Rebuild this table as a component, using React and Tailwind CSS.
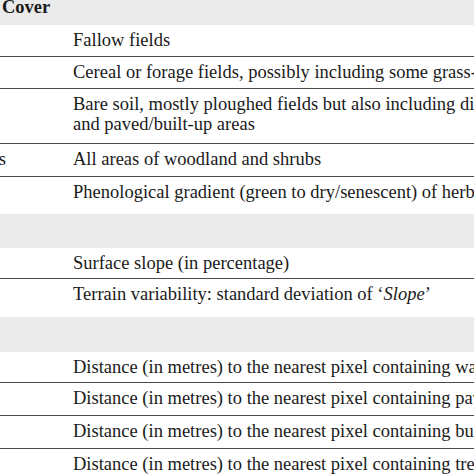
import React from 'react';

const rows = [
  { h: 'h-[32px]', left: '', lines: ['Fallow fields'] },
  { h: 'h-[32px]', left: '', lines: ['Cereal or forage fields, possibly including some grass-covered areas'] },
  { h: 'h-[55px]', left: '', lines: ['Bare soil, mostly ploughed fields but also including dirt tracks', 'and paved/built-up areas'] },
  { h: 'h-[33px]', left: 's', lines: ['All areas of woodland and shrubs'] },
  { h: 'h-[37px]', left: '', lines: ['Phenological gradient (green to dry/senescent) of herbaceous cover'] },
  { gray: true, h: 'h-[34px]' },
  { h: 'h-[31px]', left: '', lines: ['Surface slope (in percentage)'] },
  { h: 'h-[38px]', left: '', slope: true },
  { gray: true, h: 'h-[35px]' },
  { h: 'h-[31px]', left: '', lines: ['Distance (in metres) to the nearest pixel containing water'] },
  { h: 'h-[33px]', left: '', lines: ['Distance (in metres) to the nearest pixel containing paved areas'] },
  { h: 'h-[33px]', left: '', lines: ['Distance (in metres) to the nearest pixel containing built-up areas'] },
  { h: 'h-[40px]', left: '', lines: ['Distance (in metres) to the nearest pixel containing trees'], last: true },
];

export default function App() {
  return (
    <div className="w-[474px] h-[474px] overflow-hidden bg-white text-[18.5px] leading-[20px] text-[#1a1a1a] font-['Liberation_Serif',serif]">
      {/* header band */}
      <div className="h-[25px] bg-[#ebebeb] pl-[2px] overflow-hidden">
        <div className="font-bold leading-[16px] -mt-[1px]">Cover</div>
      </div>
      {rows.map((r, i) => {
        const nextGray = rows[i + 1] && rows[i + 1].gray;
        if (r.gray) {
          return <div key={i} className={`${r.h} bg-[#ebebeb]`} />;
        }
        return (
          <div
            key={i}
            className={`${r.h} flex ${r.last || nextGray ? '' : 'border-b-[1.5px] border-[#4a4a4a]'}`}
          >
            <div className="w-[73px] shrink-0 pt-[5px] overflow-hidden flex justify-end pr-[67px]">
              {r.left}
            </div>
            <div className="pt-[5px] whitespace-nowrap overflow-hidden">
              {r.slope ? (
                <div>
                  Terrain variability: standard deviation of ‘<i>Slope</i>’
                </div>
              ) : (
                r.lines.map((l, j) => <div key={j}>{l}</div>)
              )}
            </div>
          </div>
        );
      })}
    </div>
  );
}
